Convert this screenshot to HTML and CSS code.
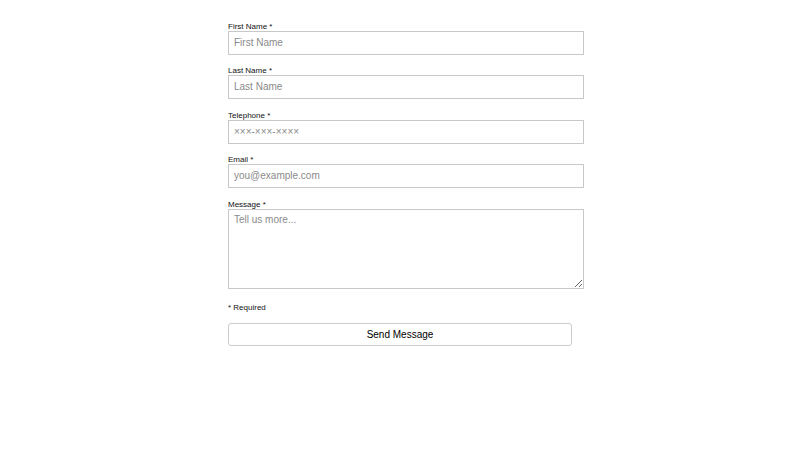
FILE: index.html
```html
<!DOCTYPE html>
<html lang="en">
<head>
<meta charset="utf-8">
<title>Contact</title>
<link rel="stylesheet" href="styles.css">
</head>
<body>
<form class="contact-form">
  <div class="field">
    <label class="field-label" for="first">First Name *</label>
    <input class="field-input" id="first" type="text" placeholder="First Name">
  </div>
  <div class="field">
    <label class="field-label" for="last">Last Name *</label>
    <input class="field-input" id="last" type="text" placeholder="Last Name">
  </div>
  <div class="field">
    <label class="field-label" for="tel">Telephone *</label>
    <input class="field-input" id="tel" type="tel" placeholder="×××-×××-××××">
  </div>
  <div class="field">
    <label class="field-label" for="email">Email *</label>
    <input class="field-input" id="email" type="email" placeholder="you@example.com">
  </div>
  <div class="field">
    <label class="field-label" for="msg">Message *</label>
    <textarea class="field-input field-area" id="msg" placeholder="Tell us more..."></textarea>
  </div>
  <p class="required-note">* Required</p>
  <button class="send-button" type="button">Send Message</button>
</form>
</body>
</html>
```
FILE: styles.css
```css
html, body {
  margin: 0;
  padding: 0;
  background: #ffffff;
}

body {
  font-family: "Liberation Sans", Arial, sans-serif;
  color: #000;
}

.contact-form {
  width: 344px;
  margin: 0 auto;
  padding-top: 22px;
  display: flex;
  flex-direction: column;
}

.field {
  display: flex;
  flex-direction: column;
  margin-bottom: 11.45px;
}

.field-label {
  font-size: 8px;
  line-height: 9px;
  color: #111;
}

.field-input {
  box-sizing: content-box;
  width: 100%;
  height: 12px;
  margin: 0;
  padding: 5px;
  border: 1px solid #c8c8c8;
  border-radius: 0;
  font-family: "Liberation Sans", Arial, sans-serif;
  font-size: 10px;
  line-height: 12px;
  color: #333;
  background: #fff;
  outline: none;
}

.field-input::placeholder {
  color: #8a8a8a;
}

.field-area {
  height: 68px;
  padding-top: 4px;
  padding-bottom: 6px;
  resize: vertical;
}

.required-note {
  margin: 2.5px 0 0;
  font-size: 8px;
  line-height: 9px;
  color: #111;
}

.send-button {
  margin-top: 11px;
  height: 23px;
  width: 100%;
  padding: 0;
  border: 1px solid #cccccc;
  border-radius: 3px;
  background: #fff;
  font-family: "Liberation Sans", Arial, sans-serif;
  font-size: 10px;
  color: #000;
}
```
